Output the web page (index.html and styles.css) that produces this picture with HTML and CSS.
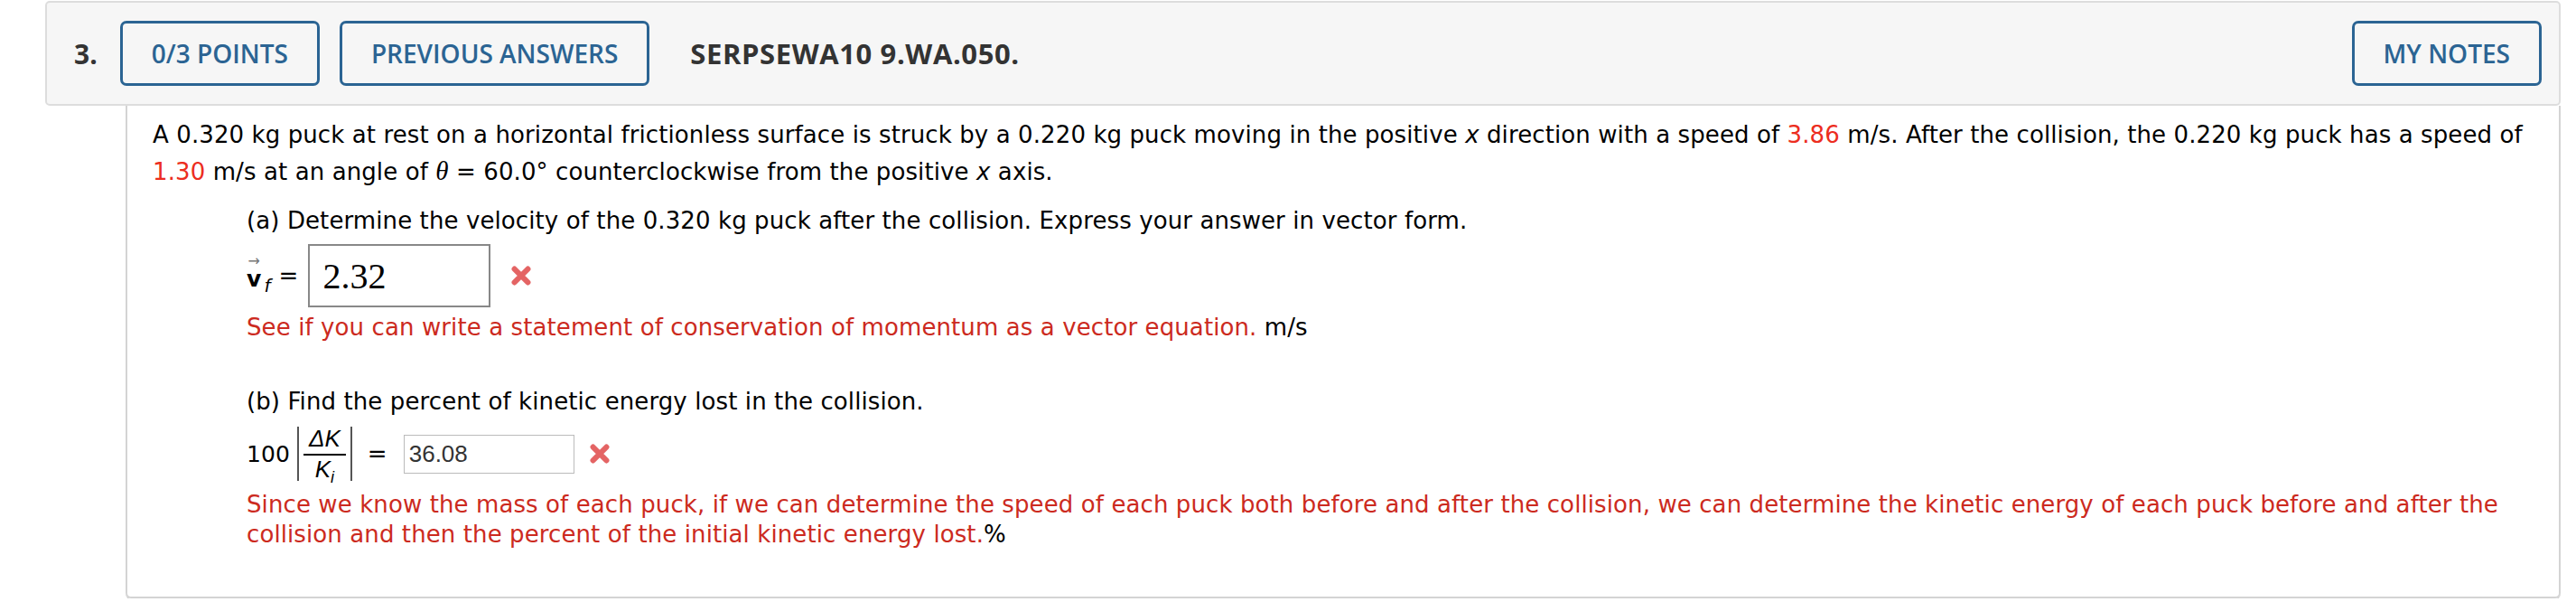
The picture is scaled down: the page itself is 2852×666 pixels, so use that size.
FILE: index.html
```html
<!DOCTYPE html>
<html>
<head>
<meta charset="utf-8">
<link rel="stylesheet" href="styles.css">
</head>
<body>
<div class="question">
  <div class="qhead">
    <span class="qnum">3.</span>
    <button class="btn">0/3 POINTS</button>
    <button class="btn">PREVIOUS ANSWERS</button>
    <span class="qcode">SERPSEWA10 9.WA.050.</span>
    <button class="btn btn-notes">MY NOTES</button>
  </div>
  <div class="qbody">
    <p class="intro">A 0.320 kg puck at rest on a horizontal frictionless surface is struck by a 0.220 kg puck moving in the positive <i>x</i> direction with a speed of <span class="val">3.86</span> m/s. After the collision, the 0.220 kg puck has a speed of <span class="val">1.30</span> m/s at an angle of <i class="theta">θ</i> = 60.0° counterclockwise from the positive <i>x</i> axis.</p>
    <div class="part">
      <p class="line">(a) Determine the velocity of the 0.320 kg puck after the collision. Express your answer in vector form.</p>
      <div class="ans-row ans-a">
        <span class="vec"><span class="arrow">&#8594;</span><b>v</b></span><i class="sub">f</i><span class="eq">=</span>
        <span class="box-a">2.32</span>
        <svg class="xmark" viewBox="0 0 28 28" width="28" height="26"><path d="M6 6 L22 22 M22 6 L6 22" stroke="#e46464" stroke-width="6.5" stroke-linecap="round" fill="none"/></svg>
      </div>
      <p class="line"><span class="fb">See if you can write a statement of conservation of momentum as a vector equation.</span> m/s</p>
    </div>
    <div class="part part-b">
      <p class="line">(b) Find the percent of kinetic energy lost in the collision.</p>
      <div class="ans-row ans-b">
        <span class="hundred">100</span>
        <span class="abs">
          <span class="frac">
            <span class="num">ΔK</span>
            <span class="den">K<sub>i</sub></span>
          </span>
        </span>
        <span class="eq eq-b">=</span>
        <span class="box-b">36.08</span>
        <svg class="xmark" viewBox="0 0 28 28" width="28" height="26"><path d="M6 6 L22 22 M22 6 L6 22" stroke="#e46464" stroke-width="6.5" stroke-linecap="round" fill="none"/></svg>
      </div>
      <p class="line"><span class="fb">Since we know the mass of each puck, if we can determine the speed of each puck both before and after the collision, we can determine the kinetic energy of each puck before and after the collision and then the percent of the initial kinetic energy lost.</span>%</p>
    </div>
  </div>
</div>
</body>
</html>
```
FILE: styles.css
```css
html, body {
  margin: 0;
  background: #ffffff;
}
body {
  padding: 1px 17px 0 50px;
}
.qhead {
  box-sizing: border-box;
  height: 116px;
  display: flex;
  align-items: center;
  background: #f6f6f6;
  border: 2px solid #dddddd;
  border-radius: 5px;
  padding: 0 19px 0 30px;
  font-family: "Open Sans", sans-serif;
}
.qnum {
  font-weight: 700;
  font-size: 30px;
  color: #333333;
  margin-right: 25px;
}
.btn {
  box-sizing: border-box;
  height: 72px;
  padding: 0 32px;
  margin-right: 22px;
  background: transparent;
  border: 3px solid #2b6493;
  border-radius: 7px;
  color: #2b6493;
  font-family: "Open Sans", sans-serif;
  font-weight: 600;
  font-size: 28px;
}
.qcode {
  font-weight: 700;
  font-size: 31px;
  letter-spacing: 0.6px;
  color: #333333;
  margin-left: 23px;
}
.btn-notes {
  margin-left: auto;
  margin-right: 0;
}
.qbody {
  box-sizing: border-box;
  height: 545px;
  margin-left: 89px;
  border: 2px solid #d4d4d4;
  border-top: none;
  border-radius: 0 0 6px 6px;
  box-shadow: 0 1px 0 #cccccc;
  padding: 12px 18px 0 28px;
  font-family: "DejaVu Sans", Verdana, sans-serif;
  font-size: 26px;
  letter-spacing: 0.1px;
  color: #000000;
}
.intro {
  margin: 0;
  line-height: 40px;
}
.val {
  color: #ec2d20;
}
.theta {
  font-family: "Liberation Serif", serif;
  font-size: 29px;
}
.part {
  margin-left: 104px;
  margin-top: 18px;
}
.part-b {
  margin-top: 49px;
}
.line {
  margin: 0;
  line-height: 33px;
}
.fb {
  color: #cc2a20;
}
.ans-row {
  display: flex;
  align-items: center;
}
.ans-a {
  margin: 9px 0 6px;
  height: 70px;
}
.vec {
  display: inline-flex;
  flex-direction: column;
  align-items: center;
  line-height: 1;
  margin-top: -6px;
}
.arrow {
  font-size: 16px;
  color: #777777;
  height: 10px;
  line-height: 10px;
  margin-bottom: 2px;
}
.vec b {
  font-size: 25px;
}
.sub {
  font-size: 20px;
  align-self: flex-end;
  margin: 0 9px 12px 3px;
}
.eq {
  margin-right: 11px;
}
.box-a {
  box-sizing: border-box;
  width: 202px;
  height: 70px;
  border: 2px solid #888888;
  padding-left: 14px;
  display: flex;
  align-items: center;
  font-family: "Liberation Serif", serif;
  font-size: 40px;
  letter-spacing: 0;
}
.xmark {
  margin-left: 20px;
  filter: blur(0.5px);
}
.ans-b {
  height: 72px;
  margin: 5px 0 4px;
}
.hundred {
  font-size: 25px;
  margin-right: 8px;
}
.abs {
  display: inline-flex;
  border-left: 2px solid #555555;
  border-right: 2px solid #555555;
  height: 60px;
  align-items: center;
  padding: 0 5px;
}
.frac {
  display: inline-flex;
  flex-direction: column;
  align-items: stretch;
  text-align: center;
  font-family: "Liberation Sans", Arial, sans-serif;
  font-style: italic;
  font-size: 26px;
  letter-spacing: 0;
}
.num {
  line-height: 25px;
  border-bottom: 2px solid #000000;
  padding: 0 6px 4px;
}
.den {
  line-height: 25px;
  padding-top: 3px;
}
.den sub {
  font-size: 18px;
  line-height: 0;
}
.eq-b {
  margin: 0 18px 0 17px;
}
.box-b {
  box-sizing: border-box;
  width: 189px;
  height: 43px;
  border: 1px solid #bbbbbb;
  padding-left: 5px;
  display: flex;
  align-items: center;
  font-family: "Liberation Sans", Arial, sans-serif;
  font-size: 26px;
  letter-spacing: 0;
  color: #333333;
}
.ans-b .xmark {
  margin-left: 14px;
}
```
